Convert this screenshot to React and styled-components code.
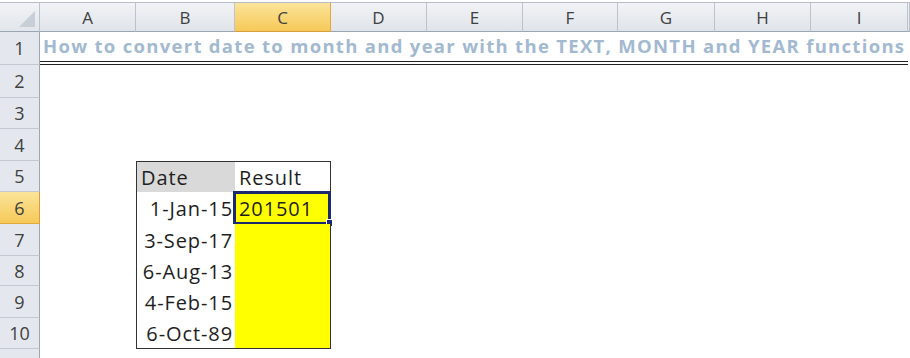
import React from 'react';
import styled, { createGlobalStyle, css } from 'styled-components';

const GlobalStyle = createGlobalStyle`
  html, body {
    margin: 0;
    padding: 0;
    background: #ffffff;
  }
  body {
    font-family: "Open Sans", sans-serif;
    overflow: hidden;
  }
`;

const columns = ['A', 'B', 'C', 'D', 'E', 'F', 'G', 'H', 'I'];
const colWidths = [96, 99, 96, 96, 96, 95, 97, 96, 97];
// row 11 only peeks in at the bottom edge, its label is out of view
const rowHeights = [33, 33, 31, 32, 31, 32, 32, 30, 32, 31, 10];

const data = [
  { date: '1-Jan-15', result: '201501' },
  { date: '3-Sep-17', result: '' },
  { date: '6-Aug-13', result: '' },
  { date: '4-Feb-15', result: '' },
  { date: '6-Oct-89', result: '' },
];

const Sheet = styled.div`
  display: grid;
  grid-template-columns: 40px ${colWidths.map((w) => w + 'px').join(' ')} 1fr;
  grid-template-rows: 29px ${rowHeights.map((h) => h + 'px').join(' ')};
  margin-top: 2px;
  border-top: 1px solid #b8bec6;
  width: 910px;
`;

const headerBase = css`
  display: flex;
  align-items: center;
  justify-content: center;
  font-family: "Open Sans", "Noto Sans", sans-serif;
  font-size: 17px;
  color: #404040;
  box-sizing: border-box;
`;

const Corner = styled.div`
  ${headerBase};
  position: relative;
  background: linear-gradient(#f1f3f6, #e2e6eb);
  border-right: 1px solid #bcc3cc;
  border-bottom: 1px solid #9ba6b4;

  &::after {
    content: '';
    position: absolute;
    right: 4px;
    bottom: 4px;
    width: 0;
    height: 0;
    border-left: 16px solid transparent;
    border-bottom: 16px solid #c9cfd6;
  }
`;

const ColHeader = styled.div`
  ${headerBase};
  background: ${(p) =>
    p.$active
      ? 'linear-gradient(#fbe49a, #f6c958)'
      : 'linear-gradient(#f1f3f6, #e0e4ea)'};
  border-right: 1px solid ${(p) => (p.$active ? '#e0a940' : '#bcc3cc')};
  border-bottom: 1px solid ${(p) => (p.$active ? '#d79e3a' : '#9ba6b4')};
`;

const RowHeader = styled.div`
  ${headerBase};
  font-size: 18px;
  background: ${(p) => (p.$active ? 'linear-gradient(#fbe49a, #f6c958)' : '#e4e8ee')};
  border-right: 1px solid ${(p) => (p.$active ? '#d79e3a' : '#9ba6b4')};
  border-bottom: 1px solid ${(p) => (p.$active ? '#e0a940' : '#c2c9d2')};
`;

const Title = styled.div`
  grid-column: 2 / span 9;
  display: flex;
  align-items: center;
  padding-left: 3px;
  padding-bottom: 2px;
  box-sizing: border-box;
  font-family: "Open Sans", sans-serif;
  font-weight: 700;
  font-size: 18.5px;
  letter-spacing: 1.3px;
  color: #a2b9d0;
  white-space: nowrap;
  overflow: visible;
  border-bottom: 4px double #222;
`;

const Blank = styled.div`
  grid-column: ${(p) => p.$span || 'auto'};
`;

const Cell = styled.div`
  position: relative;
  display: flex;
  align-items: center;
  justify-content: ${(p) => (p.$align === 'right' ? 'flex-end' : 'flex-start')};
  padding: 0 2px 0 4px;
  box-sizing: border-box;
  font-family: "Open Sans", sans-serif;
  font-size: 20px;
  letter-spacing: 0.9px;
  color: #1e1e1e;
  white-space: nowrap;
  background: ${(p) => p.$fill || '#ffffff'};
  border-left: ${(p) => (p.$left ? '1px solid #333' : 'none')};
  border-right: ${(p) => (p.$right ? '1px solid #333' : 'none')};
  border-top: ${(p) => (p.$top ? '1px solid #333' : 'none')};
  border-bottom: ${(p) => (p.$bottom ? '1px solid #333' : 'none')};
`;

const Selection = styled.div`
  position: absolute;
  left: -2px;
  top: -1px;
  right: -1px;
  bottom: -1px;
  border: 3px solid #1b2a6e;
  pointer-events: none;

  &::after {
    content: '';
    position: absolute;
    right: -5px;
    bottom: -5px;
    width: 5px;
    height: 6px;
    background: #1b2a6e;
    border: 1px solid #ffffff;
  }
`;

const renderRow = (rowNum) => {
  const items = [
    <RowHeader key={`h${rowNum}`} $active={rowNum === 6}>
      {rowNum <= 10 ? rowNum : null}
    </RowHeader>,
  ];

  if (rowNum === 1) {
    items.push(
      <Title key="title">How to convert date to month and year with the TEXT, MONTH and YEAR functions</Title>,
      <Blank key="t-rest" />
    );
    return items;
  }

  if (rowNum >= 5 && rowNum <= 10) {
    const isHead = rowNum === 5;
    const isLast = rowNum === 10;
    const entry = data[rowNum - 6];
    items.push(<Blank key={`a${rowNum}`} />);
    items.push(
      <Cell
        key={`b${rowNum}`}
        $left
        $top={isHead}
        $bottom={isLast}
        $fill={isHead ? '#d9d9d9' : '#ffffff'}
        $align={isHead ? 'left' : 'right'}
      >
        {isHead ? 'Date' : entry.date}
      </Cell>
    );
    items.push(
      <Cell
        key={`c${rowNum}`}
        $right
        $top={isHead}
        $bottom={isLast}
        $fill={isHead ? '#ffffff' : '#ffff00'}
      >
        {isHead ? 'Result' : entry.result}
        {rowNum === 6 && <Selection />}
      </Cell>
    );
    items.push(<Blank key={`r${rowNum}`} $span="5 / span 7" />);
    return items;
  }

  items.push(<Blank key={`e${rowNum}`} $span="2 / span 10" />);
  return items;
};

export default function App() {
  return (
    <>
      <GlobalStyle />
      <Sheet>
        <Corner />
        {columns.map((c) => (
          <ColHeader key={c} $active={c === 'C'}>
            {c}
          </ColHeader>
        ))}
        <ColHeader />
        {rowHeights.map((_, i) => renderRow(i + 1))}
      </Sheet>
    </>
  );
}
